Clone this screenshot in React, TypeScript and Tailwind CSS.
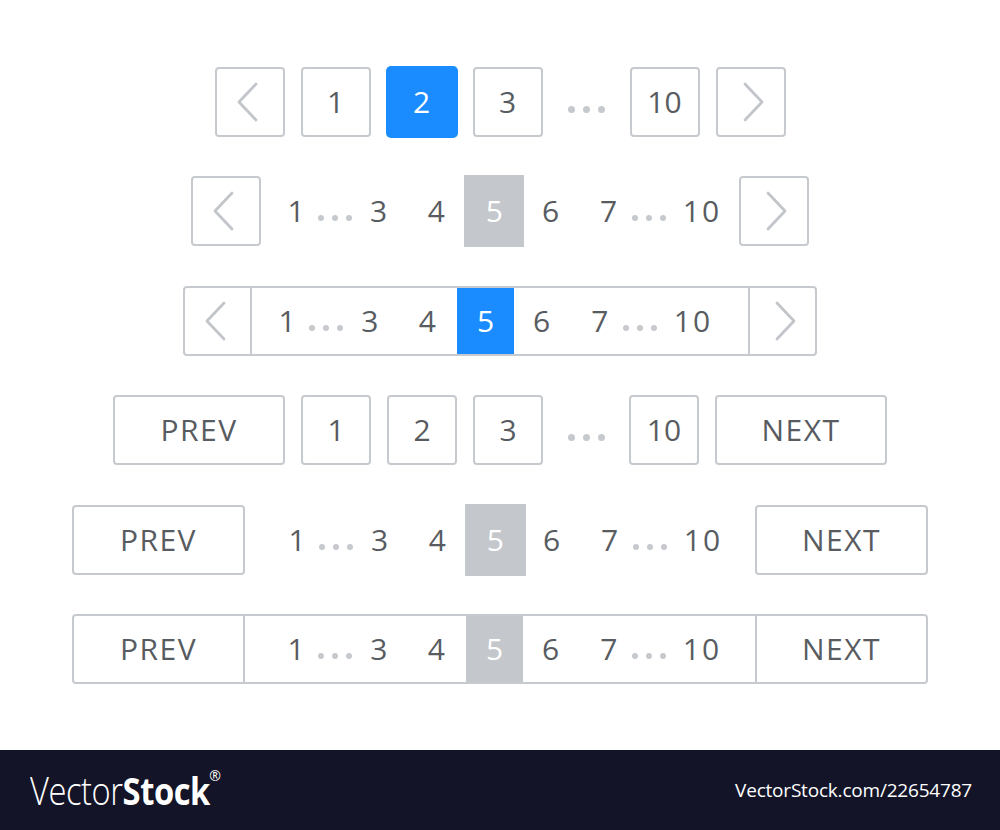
import React from "react";

const TXT = "text-[#585c61]";
const BORDER = "border-[#c6c9cd]";

function Chevron({ dir }: { dir: "left" | "right" }) {
  return (
    <svg width="24" height="40" viewBox="0 0 24 40" fill="none">
      {dir === "left" ? (
        <polyline points="20,2 3,20 20,38" stroke="#c2c5c9" strokeWidth="2.8" strokeLinecap="round" strokeLinejoin="round" />
      ) : (
        <polyline points="4,2 21,20 4,38" stroke="#c2c5c9" strokeWidth="2.8" strokeLinecap="round" strokeLinejoin="round" />
      )}
    </svg>
  );
}

function Dots({ size = 6, gap = 8 }: { size?: number; gap?: number }) {
  return (
    <div className="flex items-center translate-y-[7px]" style={{ gap }}>
      {[0, 1, 2].map((i) => (
        <span key={i} className="rounded-full bg-[#c6c9cd]" style={{ width: size, height: size }} />
      ))}
    </div>
  );
}

function Box({ children, w = 70, active = false }: { children: React.ReactNode; w?: number; active?: boolean }) {
  if (active) {
    return (
      <div
        className="h-[72px] -mx-px rounded-[5px] bg-[#1a8cff] flex items-center justify-center text-white text-[30px] font-normal leading-none shrink-0"
        style={{ width: w + 2 }}
      >
        {children}
      </div>
    );
  }
  return (
    <div
      className={`h-[70px] rounded-[4px] border-2 ${BORDER} bg-white flex items-center justify-center ${TXT} text-[30px] font-normal leading-none shrink-0`}
      style={{ width: w }}
    >
      {children}
    </div>
  );
}

function Num({ n, ml = 0, wide = false }: { n: string; ml?: number; wide?: boolean }) {
  return (
    <span
      className={`${TXT} text-[30px] font-normal leading-none shrink-0 text-center ${wide ? "tracking-[2px]" : ""}`}
      style={{ marginLeft: ml }}
    >
      {n}
    </span>
  );
}

function Sequence({ activeClass, activeW = 60, activeH = 72 }: { activeClass: string; activeW?: number; activeH?: number }) {
  const boxMl = 19.5 + (60 - activeW) / 2;
  const nextMl = 17.5 + (60 - activeW) / 2;
  return (
    <div className="flex items-center h-full shrink-0">
      <Num n="1" />
      <div className="ml-[13.5px]">
        <Dots />
      </div>
      <Num n="3" ml={18} />
      <Num n="4" ml={40.5} />
      <div
        className={`${activeClass} flex items-center justify-center text-white text-[30px] font-normal leading-none shrink-0`}
        style={{ width: activeW, height: activeH, marginLeft: boxMl }}
      >
        5
      </div>
      <Num n="6" ml={nextMl} />
      <Num n="7" ml={41} />
      <div className="ml-[14.5px]">
        <Dots />
      </div>
      <Num n="10" ml={17} wide />
    </div>
  );
}

function Word({ t }: { t: string }) {
  return <span className={`${TXT} text-[30px] font-normal leading-none tracking-[1.5px]`}>{t}</span>;
}

export default function App() {
  return (
    <div className="w-[1000px] h-[830px] bg-white flex flex-col" style={{ fontFamily: '"Open Sans", "Noto Sans", sans-serif' }}>
      <div className="flex-1 flex flex-col items-center pt-[67px] gap-[39.4px]">
        {/* Row 1 */}
        <div className="h-[70px] flex items-center gap-4">
          <Box>
            <span className="-ml-1 flex">
              <Chevron dir="left" />
            </span>
          </Box>
          <Box>1</Box>
          <Box active>2</Box>
          <Box>3</Box>
          <div className="w-[55px] flex justify-center">
            <Dots size={7} gap={8} />
          </div>
          <Box>10</Box>
          <Box>
            <span className="ml-1 flex">
              <Chevron dir="right" />
            </span>
          </Box>
        </div>

        {/* Row 2 */}
        <div className="h-[70px] flex items-center">
          <Box>
            <span className="-ml-1 flex">
              <Chevron dir="left" />
            </span>
          </Box>
          <div className="h-[70px] pl-[26.5px] pr-[18px] flex items-center">
            <Sequence activeClass="bg-[#c4c7cb]" activeW={60} activeH={72} />
          </div>
          <Box>
            <span className="ml-1 flex">
              <Chevron dir="right" />
            </span>
          </Box>
        </div>

        {/* Row 3 */}
        <div className={`h-[70px] w-[634px] flex items-stretch border-2 ${BORDER} rounded-[4px] bg-white`}>
          <div className={`w-[67px] border-r-2 ${BORDER} flex items-center justify-center`}>
            <span className="-ml-1 flex">
              <Chevron dir="left" />
            </span>
          </div>
          <div className="flex-1 flex items-center pl-[26.5px]">
            <Sequence activeClass="bg-[#1a8cff]" activeW={57} activeH={66} />
          </div>
          <div className={`w-[67px] border-l-2 ${BORDER} flex items-center justify-center`}>
            <span className="ml-1 flex">
              <Chevron dir="right" />
            </span>
          </div>
        </div>

        {/* Row 4 */}
        <div className="h-[70px] flex items-center gap-4">
          <Box w={172}>
            <Word t="PREV" />
          </Box>
          <Box>1</Box>
          <Box>2</Box>
          <Box>3</Box>
          <div className="w-[54px] flex justify-center">
            <Dots size={7} gap={8} />
          </div>
          <Box>10</Box>
          <Box w={172}>
            <Word t="NEXT" />
          </Box>
        </div>

        {/* Row 5 */}
        <div className="h-[70px] flex items-center">
          <Box w={173}>
            <Word t="PREV" />
          </Box>
          <div className="h-[70px] pl-[43.5px] pr-[33px] flex items-center">
            <Sequence activeClass="bg-[#c4c7cb]" activeW={61} activeH={72} />
          </div>
          <Box w={173}>
            <Word t="NEXT" />
          </Box>
        </div>

        {/* Row 6 */}
        <div className={`h-[70px] w-[856px] flex items-stretch border-2 ${BORDER} rounded-[4px] bg-white`}>
          <div className={`w-[171px] border-r-2 ${BORDER} flex items-center justify-center`}>
            <Word t="PREV" />
          </div>
          <div className="flex-1 flex items-center pl-[42.5px]">
            <Sequence activeClass="bg-[#c4c7cb]" activeW={57} activeH={66} />
          </div>
          <div className={`w-[171px] border-l-2 ${BORDER} flex items-center justify-center`}>
            <Word t="NEXT" />
          </div>
        </div>
      </div>

      {/* Footer */}
      <div className="h-[80px] bg-[#131427] flex items-center justify-between pl-[30px] pr-[28px] shrink-0">
        <div className="flex items-start text-white leading-none">
          <span className="inline-block origin-left scale-x-[0.86] text-[38px] tracking-[-0.5px]">
            <span className="font-light">Vector</span>
            <span className="font-bold">Stock</span>
          </span>
          <span className="text-[14px] -ml-[30px] mt-[-2px]">®</span>
        </div>
        <span className="text-white text-[19px] leading-none tracking-[-0.2px]">VectorStock.com/22654787</span>
      </div>
    </div>
  );
}
